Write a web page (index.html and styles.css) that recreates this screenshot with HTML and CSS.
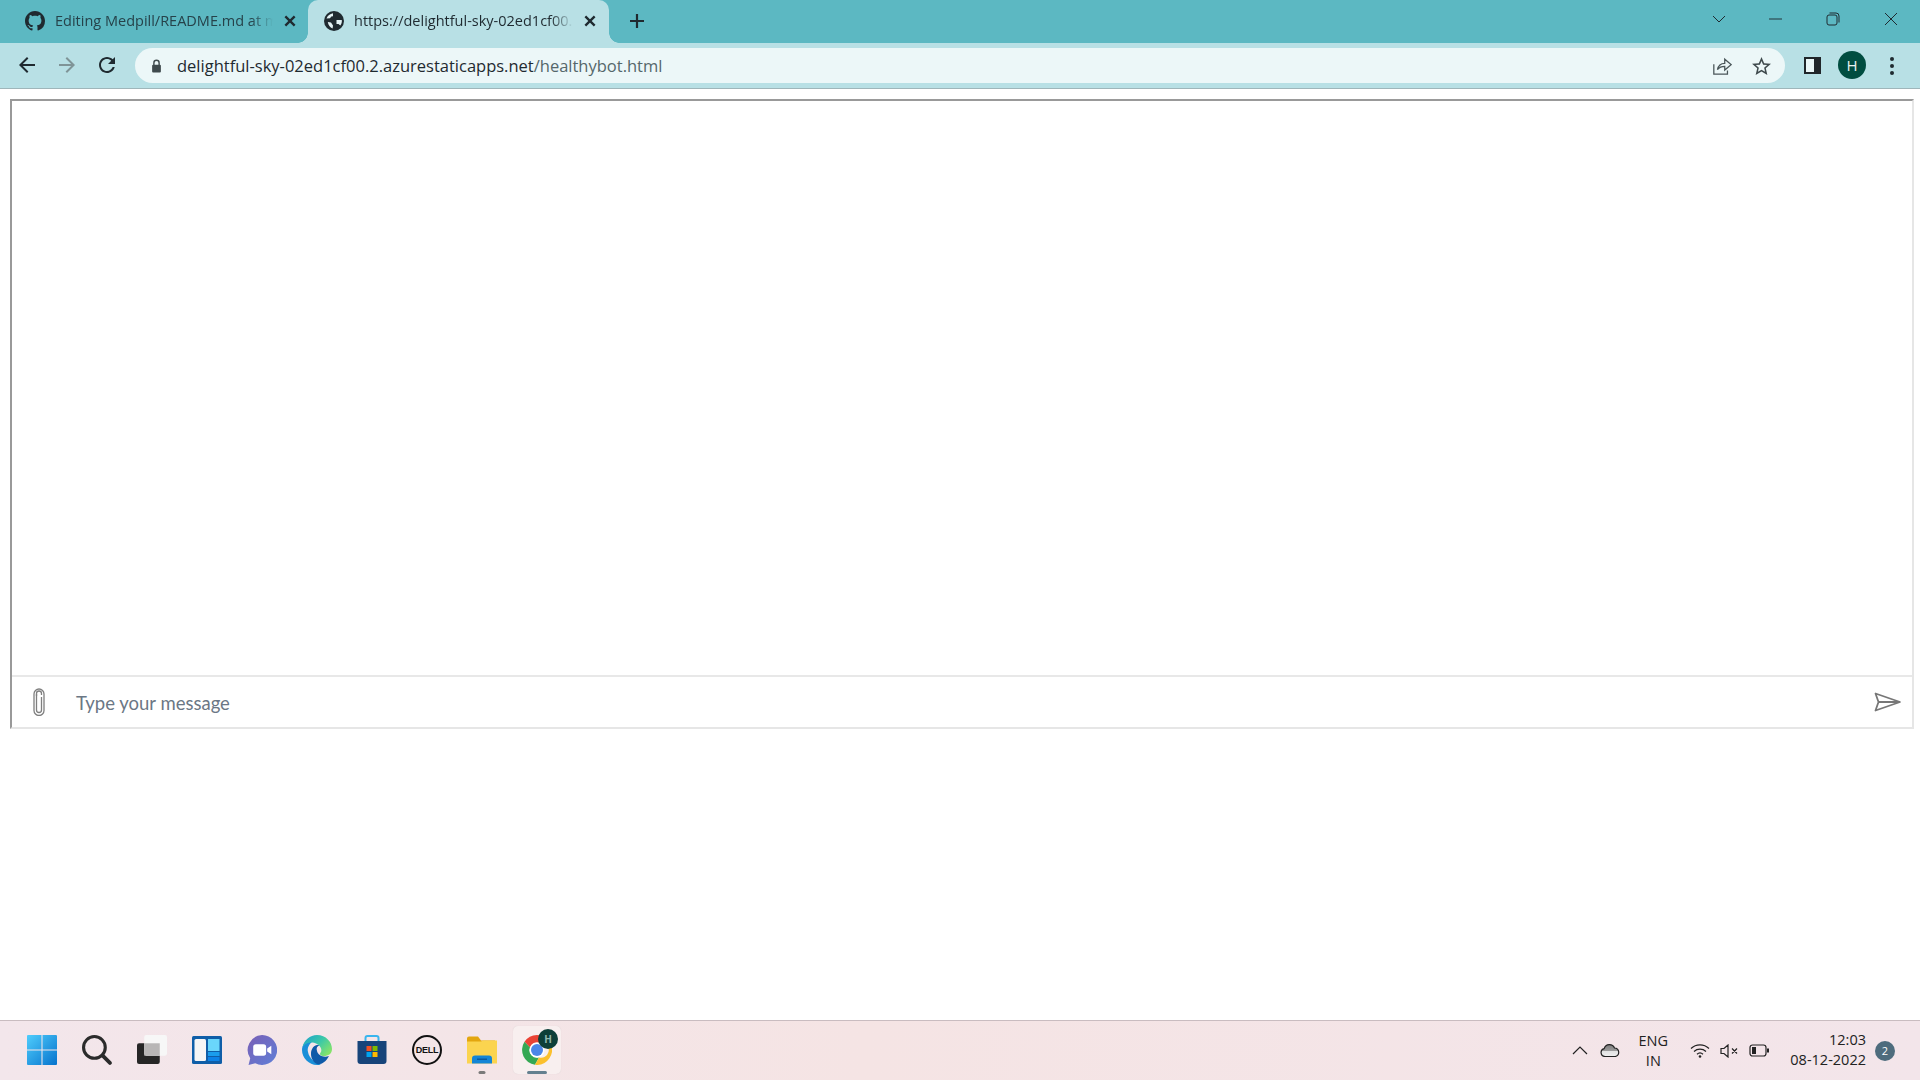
FILE: index.html
```html
<!DOCTYPE html>
<html lang="en">
<head>
<meta charset="utf-8">
<title>healthybot</title>
<link rel="stylesheet" href="styles.css">
</head>
<body>
<div class="tabstrip">
  <div class="tab">
    <svg class="favicon" viewBox="0 0 16 16"><path fill="#1f2a30" d="M8 0C3.58 0 0 3.58 0 8c0 3.54 2.29 6.53 5.47 7.59.4.07.55-.17.55-.38 0-.19-.01-.82-.01-1.49-2.01.37-2.53-.49-2.69-.94-.09-.23-.48-.94-.82-1.13-.28-.15-.68-.52-.01-.53.63-.01 1.08.58 1.23.82.72 1.21 1.87.87 2.33.66.07-.52.28-.87.51-1.07-1.78-.2-3.64-.89-3.64-3.95 0-.87.31-1.59.82-2.15-.08-.2-.36-1.02.08-2.12 0 0 .67-.21 2.2.82.64-.18 1.32-.27 2-.27.68 0 1.36.09 2 .27 1.53-1.04 2.2-.82 2.2-.82.44 1.1.16 1.92.08 2.12.51.56.82 1.27.82 2.15 0 3.07-1.87 3.75-3.65 3.95.29.25.54.73.54 1.48 0 1.07-.01 1.93-.01 2.2 0 .21.15.46.55.38A8.013 8.013 0 0016 8c0-4.42-3.58-8-8-8z"/></svg>
    <span class="tab-title title-dim">Editing Medpill/README.md at m</span>
    <svg class="tab-close" viewBox="0 0 12 12"><path d="M2 2l8 8M10 2l-8 8"/></svg>
  </div>
  <div class="tab tab-active">
    <svg class="favicon" viewBox="2 2 20 20"><circle cx="12" cy="12" r="10" fill="#1f2a30"/><path fill="#e4f3f5" d="M11 4.300C8 4.800 5.500 6.800 4.500 9.500L8 9.300 9.300 7.500 11 7.200zM14.500 11h5.300c.3 2-.3 4-1.500 5.500L16.500 15H14.500zM5.800 13l3.200.5 2 3-.4 3C8 18.700 6.300 16 5.800 13z"/></svg>
    <span class="tab-title">https://delightful-sky-02ed1cf00.2</span>
    <svg class="tab-close" viewBox="0 0 12 12"><path d="M2 2l8 8M10 2l-8 8"/></svg>
  </div>
  <svg class="newtab" viewBox="0 0 16 16"><path d="M8 1v14M1 8h14"/></svg>
  <div class="winctl">
    <svg class="win-chevron" viewBox="0 0 14 8"><path d="M1 1l6 6 6-6"/></svg>
    <svg class="win-min" viewBox="0 0 14 2"><path d="M0 1h14"/></svg>
    <svg class="win-max" viewBox="0 0 14 14"><rect x="1" y="3" width="10" height="10" rx="2"/><path d="M3.500 1H10a3 3 0 0 1 3 3v6.500"/></svg>
    <svg class="win-close" viewBox="0 0 14 14"><path d="M1 1l12 12M13 1L1 13"/></svg>
  </div>
</div>

<div class="toolbar">
  <svg class="nav-icon" viewBox="0 0 24 24"><path fill="#1f2a30" d="M20 11H7.830l5.590-5.590L12 4l-8 8 8 8 1.410-1.410L7.830 13H20v-2z"/></svg>
  <svg class="nav-icon" viewBox="0 0 24 24"><path fill="#7f9497" d="M4 11h12.170l-5.590-5.590L12 4l8 8-8 8-1.410-1.410L16.170 13H4v-2z"/></svg>
  <svg class="nav-icon" viewBox="0 0 24 24"><path fill="#1f2a30" d="M17.650 6.350C16.200 4.900 14.210 4 12 4c-4.420 0-7.990 3.580-7.990 8s3.570 8 7.990 8c3.730 0 6.840-2.550 7.730-6h-2.080c-.820 2.330-3.040 4-5.650 4-3.310 0-6-2.690-6-6s2.690-6 6-6c1.660 0 3.140.690 4.220 1.780L13 11h7V4l-2.350 2.350z"/></svg>
  <div class="omnibox">
    <svg class="lock" viewBox="0 0 12 16"><path class="lock-shackle" d="M3 7V4.500a3 3 0 0 1 6 0V7"/><rect class="lock-body" x="1" y="6.500" width="10" height="9" rx="1.200"/></svg>
    <div class="url"><span class="url-host">delightful-sky-02ed1cf00.2.azurestaticapps.net</span><span class="url-path">/healthybot.html</span></div>
    <svg class="share" viewBox="0 0 22 22"><path d="M2 9v11h15v-4"/><path d="M6 15c1-5 4-7 8-7V3.500l7 6-7 6V11.500c-3 0-6 1-8 3.500z"/></svg>
    <svg class="star" viewBox="2 2 20 19"><path fill="#3f4a4d" d="M22 9.240l-7.190-.620L12 2 9.190 8.630 2 9.240l5.460 4.730L5.820 21 12 17.270 18.180 21l-1.630-7.030L22 9.240zM12 15.400l-3.760 2.270 1-4.280-3.320-2.880 4.380-.380L12 6.100l1.710 4.040 4.380.380-3.320 2.880 1 4.280L12 15.400z"/></svg>
  </div>
  <div class="side-toggle"></div>
  <div class="avatar">H</div>
  <div class="kebab"><i></i><i></i><i></i></div>
</div>

<main class="page">
  <section class="chat">
    <div class="chat-log"></div>
    <div class="composer">
      <svg class="clip" viewBox="0 0 14 28"><path d="M9.500 9v13a2.500 2.500 0 0 1-5 0V6"/><path d="M4.500 8V5.500a2.500 2.500 0 0 1 5 0V7M12 8v14.500a5 5 0 0 1-10 0V6a5 5 0 0 1 10 0v2"/></svg>
      <div class="placeholder">Type your message</div>
      <svg class="send" viewBox="0 0 28 20"><path d="M1.500 1.500L26 10 1.500 18.500 4.500 10zM4.500 10H26"/></svg>
    </div>
  </section>
</main>

<footer class="taskbar">
  <div class="tb-apps">
    <div class="app">
      <svg viewBox="0 0 29 29"><defs><linearGradient id="win" x1="0" y1="0" x2="1" y2="1"><stop offset="0" stop-color="#4fcdfc"/><stop offset="1" stop-color="#0673cd"/></linearGradient></defs><path fill="url(#win)" d="M0 1a1 1 0 0 1 1-1h13v14H0zM15 0h13a1 1 0 0 1 1 1v13H15zM0 15h14v14H1a1 1 0 0 1-1-1zM15 15h14v13a1 1 0 0 1-1 1H15z"/></svg>
    </div>
    <div class="app">
      <svg viewBox="0 0 29 29"><circle cx="12" cy="12" r="10.500" fill="none" stroke="#2b2b2b" stroke-width="3"/><path d="M20 20l7 7" stroke="#2b2b2b" stroke-width="3.600" stroke-linecap="round"/></svg>
    </div>
    <div class="app">
      <svg viewBox="0 0 29 29"><rect x="0" y="8" width="22" height="20" rx="2" fill="#262626"/><rect x="7" y="0" width="22" height="20" rx="2" fill="#f7f7f7"/><rect x="7" y="8" width="15" height="12" fill="#b8b6b6"/></svg>
    </div>
    <div class="app">
      <svg viewBox="0 0 30 28"><rect width="30" height="28" rx="1.500" fill="#0f5ea8"/><rect x="2.500" y="3" width="11.500" height="22" rx="1.500" fill="#f5f5f5"/><rect x="16" y="3" width="11.500" height="12" fill="#6ad6fb"/><rect x="16" y="16" width="11.500" height="4" fill="#1a9ded"/><rect x="16" y="21" width="11.500" height="4" fill="#0d82e6"/></svg>
    </div>
    <div class="app">
      <svg viewBox="0 0 29 29"><defs><linearGradient id="teams" x1="0" y1="0" x2="1" y2="1"><stop offset="0" stop-color="#7a5fb5"/><stop offset="1" stop-color="#5f7fd8"/></linearGradient></defs><path fill="url(#teams)" d="M14.500 0a14.500 14.500 0 1 1-6.500 27.400L1.500 29l1.600-6.500A14.500 14.500 0 0 1 14.500 0z"/><rect x="6" y="9" width="12.500" height="11" rx="2.500" fill="#fff"/><path fill="#fff" d="M19.500 13l4-2.500v8l-4-2.500z"/></svg>
    </div>
    <div class="app">
      <svg viewBox="0 0 30 30"><defs><linearGradient id="edge1" x1="0" y1="0" x2="1" y2=".7"><stop offset="0" stop-color="#1ba0cf"/><stop offset=".55" stop-color="#3cc8a8"/><stop offset="1" stop-color="#84e36a"/></linearGradient></defs><path fill="#1a8fd8" d="M0 15C0 9 5 5 11 6c-4 3-6 7-5 11 1 6 7 11 13 12.500-1 .5-3 .5-4 .5C7 30 0 23 0 15z"/><path fill="#0f5aa8" d="M9 19c0-6 4-10 9-9-3 1-4 3-3 6 1 4 6 7 12 5-3 6-8 9-12 8-4-2-6-6-6-10z"/><path fill="url(#edge1)" d="M.5 12C2 5 8 0 15 0c9 0 15 7 15 14 0 5-4 7-8 7-4 0-5-2-3-4 1-2 0-6-4-8C9 6 3 8 .5 12z"/></svg>
    </div>
    <div class="app">
      <svg viewBox="0 0 29 30"><path d="M8 7V3a2 2 0 0 1 2-2h9a2 2 0 0 1 2 2v4" fill="none" stroke="#39b5ee" stroke-width="2"/><path fill="#17447a" d="M0 6h29v20a3 3 0 0 1-3 3H3a3 3 0 0 1-3-3z"/><rect x="9" y="11" width="5" height="5" fill="#f25022"/><rect x="15" y="11" width="5" height="5" fill="#7fba00"/><rect x="9" y="17" width="5" height="5" fill="#00a4ef"/><rect x="15" y="17" width="5" height="5" fill="#ffb900"/></svg>
    </div>
    <div class="app app-dell">
      <span class="dell-text">DELL</span>
    </div>
    <div class="app app-open">
      <svg viewBox="0 0 30 27"><path fill="#e3a60f" d="M0 2a2 2 0 0 1 2-2h9l3 4h14v6H0z"/><path fill="#fbd44f" d="M0 5h14l2-1h14v23H0z"/><path fill="#1385d6" d="M5 22v5h20v-5a3 3 0 0 0-3-3H8a3 3 0 0 0-3 3z"/><rect x="10" y="22" width="10" height="1.500" fill="#0a5a9f"/></svg>
    </div>
    <div class="app app-active">
      <svg class="chrome" viewBox="0 0 30 30"><path fill="#ea4335" d="M15 0a15 15 0 0 1 13 7.500H15a7.500 7.500 0 0 0-7 5L2.500 6.800A15 15 0 0 1 15 0z"/><path fill="#34a853" d="M2.500 6.800L8 12.500a7.500 7.500 0 0 0 9 10l-4 7.300A15 15 0 0 1 2.500 6.800z"/><path fill="#fbc02d" d="M28 7.500A15 15 0 0 1 13 29.800l4-7.300a7.500 7.500 0 0 0 4-15z"/><circle cx="15" cy="15" r="7.500" fill="#fff"/><circle cx="15" cy="15" r="6" fill="#4a86e8"/></svg>
      <div class="badge-h">H</div>
    </div>
  </div>
  <div class="tray">
    <svg class="tray-caret" viewBox="0 0 16 9"><path d="M1 8l7-7 7 7"/></svg>
    <svg class="tray-cloud" viewBox="0 0 20 13"><defs><linearGradient id="cloud" x1="0" y1="0" x2="0" y2="1"><stop offset="0" stop-color="#7d7d7d"/><stop offset=".55" stop-color="#9d9d9d"/><stop offset=".56" stop-color="#e2e2e2"/><stop offset="1" stop-color="#efefef"/></linearGradient></defs><path fill="url(#cloud)" d="M5 12.500a4 4 0 0 1-.8-7.900A5.500 5.500 0 0 1 14.500 4a4.300 4.300 0 0 1 .8 8.500z"/></svg>
    <div class="lang"><span>ENG</span><span>IN</span></div>
    <svg class="tray-wifi" viewBox="0 0 20 15"><path d="M1 5.500a13 13 0 0 1 18 0M4 8.500a9 9 0 0 1 12 0M7 11.200a4.500 4.500 0 0 1 6 0"/><circle cx="10" cy="13.500" r="1.300"/></svg>
    <svg class="tray-sound" viewBox="0 0 20 14"><path d="M1 4.500h3l4-3.500v12l-4-3.500H1zM12 4.500l5 5M17 4.500l-5 5"/></svg>
    <svg class="tray-batt" viewBox="0 0 20 13"><rect x="1" y="1" width="16" height="11" rx="2.500"/><rect class="batt-fill" x="3" y="3" width="4" height="7"/><rect class="batt-fill" x="18" y="4.500" width="2" height="4"/></svg>
    <div class="clock"><div>12:03</div><div>08-12-2022</div></div>
    <div class="notif">2</div>
  </div>
</footer>
</body>
</html>
```
FILE: styles.css
```css
* { box-sizing: border-box; }
html, body { margin: 0; padding: 0; height: 1080px; overflow: hidden; }
body {
  width: 1920px;
  display: flex;
  flex-direction: column;
  background: #fff;
  font-family: "Open Sans", "Noto Sans", sans-serif;
  color: #1f2a30;
}

/* tab strip */
.tabstrip {
  height: 43px;
  flex: none;
  background: #5cb8c2;
  display: flex;
  align-items: stretch;
  padding-left: 9px;
}
.tab {
  width: 299px;
  display: flex;
  align-items: center;
  padding: 0 11px 2px 16px;
  gap: 10px;
  position: relative;
}
.tab-active {
  width: 301px;
  background: #b8e0e5;
  border-radius: 10px 10px 0 0;
  padding: 0 12px 2px 16px;
}
.tab-active::before, .tab-active::after {
  content: "";
  position: absolute;
  bottom: 0;
  width: 10px;
  height: 10px;
  background: radial-gradient(circle at 0 0, #5cb8c2 9.500px, #b8e0e5 10px);
}
.tab-active::before { left: -10px; }
.tab-active::after { right: -10px; transform: scaleX(-1); }
.favicon { width: 20px; height: 20px; flex: none; }
.tab-title {
  flex: 1;
  min-width: 0;
  font-size: 14.500px;
  white-space: nowrap;
  color: #1f2a30;
  -webkit-mask-image: linear-gradient(to right, #000 90%, transparent 100%);
  mask-image: linear-gradient(to right, #000 90%, transparent 100%);
}
.title-dim { color: #26424a; }
.tab-close { width: 14px; height: 14px; flex: none; fill: none; stroke: #1f2a30; stroke-width: 2; }
.newtab { width: 16px; height: 16px; align-self: center; margin: 0 0 2px 20px; fill: none; stroke: #1f2a30; stroke-width: 2.200; }
.winctl { margin-left: auto; display: flex; align-items: center; padding-bottom: 5px; }
.winctl svg { fill: none; stroke: #1f2a30; stroke-width: 1; flex: none; }
.win-chevron { width: 14px; height: 8px; margin-right: 43px; }
.win-min { width: 13px; height: 2px; margin-right: 44px; }
.win-max { width: 14px; height: 14px; margin-right: 44px; }
.win-close { width: 14px; height: 14px; margin-right: 22px; }

/* toolbar */
.toolbar {
  height: 46px;
  flex: none;
  background: #b8e0e5;
  border-bottom: 1px solid #9fb6ba;
  display: flex;
  align-items: flex-start;
  padding: 5px 0 0 15px;
}
.nav-icon { width: 24px; height: 24px; flex: none; margin: 5px 16px 0 0; }
.omnibox {
  width: 1650px;
  height: 35px;
  background: #ecf7f8;
  border-radius: 18px;
  display: flex;
  align-items: center;
  padding: 0 14px 0 16px;
  flex: none;
}
.lock { width: 11px; height: 14px; flex: none; margin-right: 15px; }
.lock-shackle { fill: none; stroke: #3f4a4d; stroke-width: 1.600; }
.lock-body { fill: #3f4a4d; }
.url { flex: 1; font-size: 16.500px; white-space: nowrap; }
.url-host { color: #1f2a30; }
.url-path { color: #55676b; }
.share { width: 20px; height: 20px; flex: none; margin-right: 20px; fill: none; stroke: #4a5659; stroke-width: 1.400; }
.star { width: 19px; height: 18px; flex: none; }
.side-toggle {
  width: 17px;
  height: 17px;
  flex: none;
  margin: 9px 0 0 19px;
  background: #eaf6f7;
  border: 2px solid #20262a;
  border-right-width: 7px;
}
.avatar {
  width: 28px;
  height: 28px;
  flex: none;
  margin: 3px 0 0 17px;
  border-radius: 50%;
  background: #004d40;
  color: #e8f3f1;
  font-size: 15px;
  display: flex;
  align-items: center;
  justify-content: center;
}
.kebab { display: flex; flex-direction: column; gap: 3px; margin: 9px 0 0 24px; flex: none; }
.kebab i { display: block; width: 4px; height: 4px; border-radius: 50%; background: #1f2a30; }

/* page */
.page { flex: 1; min-height: 0; padding: 10px 6px 0 10px; }
.chat {
  height: 630px;
  display: flex;
  flex-direction: column;
  border: 2px solid #e6e6e6;
  border-top-color: #999;
  border-left-color: #999;
}
.chat-log { flex: 1; border-bottom: 2px solid #e8e8e8; }
.composer { height: 50px; flex: none; display: flex; align-items: center; padding: 0 10px 0 20px; }
.clip { width: 14px; height: 28px; flex: none; fill: none; stroke: #7f7f7f; stroke-width: 1.300; }
.placeholder { flex: 1; margin: 1px 0 0 30px; font-family: Lato, "Open Sans", sans-serif; font-size: 18.500px; color: #6b7785; }
.send { width: 28px; height: 20px; flex: none; fill: none; stroke: #777; stroke-width: 1.800; stroke-linejoin: round; }

/* taskbar */
.taskbar {
  height: 60px;
  flex: none;
  background: linear-gradient(90deg, #f3e6eb 0%, #f5e4e4 45%, #f3e5ea 100%);
  border-top: 1px solid #c9bcc0;
  display: flex;
  align-items: center;
  justify-content: space-between;
  padding: 0 25px 0 18px;
}
.tb-apps { display: flex; align-items: center; gap: 7px; height: 100%; padding-bottom: 1px; }
.app {
  width: 48px;
  height: 48px;
  flex: none;
  display: flex;
  align-items: center;
  justify-content: center;
  position: relative;
  border-radius: 5px;
}
.app svg { width: 30px; height: 30px; }
.app-open::after, .app-active::after {
  content: "";
  position: absolute;
  bottom: 0;
  left: 50%;
  height: 3px;
  border-radius: 2px;
  transform: translateX(-50%);
}
.app-open::after { width: 7px; background: #7a7a7a; }
.app-active { background: #f8efef; box-shadow: 0 0 1px #d9cfd0; }
.app-active::after { width: 20px; background: #64808f; }
.dell-text {
  width: 30px;
  height: 30px;
  border: 2px solid #111;
  border-radius: 50%;
  display: flex;
  align-items: center;
  justify-content: center;
  font-family: "Liberation Sans", sans-serif;
  font-weight: 700;
  font-size: 9px;
  letter-spacing: -.3px;
  color: #111;
}
.badge-h {
  position: absolute;
  top: 3px;
  right: 3px;
  width: 20px;
  height: 20px;
  border-radius: 50%;
  background: #0d3f38;
  color: #8fb8ae;
  font-size: 10px;
  font-weight: 700;
  display: flex;
  align-items: center;
  justify-content: center;
}
.tray { display: flex; align-items: center; font-size: 14.500px; color: #222; }
.tray svg { flex: none; fill: none; stroke: #222; stroke-width: 1.200; }
.tray-caret { width: 16px; height: 9px; margin-right: 12px; }
.tray-cloud { width: 20px; height: 13px; margin-right: 19px; }
.lang { width: 28px; line-height: 20px; margin-right: 23px; white-space: nowrap; display: flex; flex-direction: column; align-items: center; }
.tray-wifi { width: 20px; height: 15px; margin-right: 10px; }
.tray-wifi circle { fill: #222; stroke: none; }
.tray-sound { width: 20px; height: 14px; margin-right: 9px; }
.tray-batt { width: 20px; height: 13px; margin-right: 21px; }
.tray .batt-fill { fill: #222; stroke: none; }
.clock { text-align: right; line-height: 20px; white-space: nowrap; margin-bottom: 2px; }
.notif {
  width: 20px;
  height: 20px;
  margin-left: 9px;
  border-radius: 50%;
  background: #4e6c7d;
  color: #fff;
  font-size: 11px;
  display: flex;
  align-items: center;
  justify-content: center;
}
```
